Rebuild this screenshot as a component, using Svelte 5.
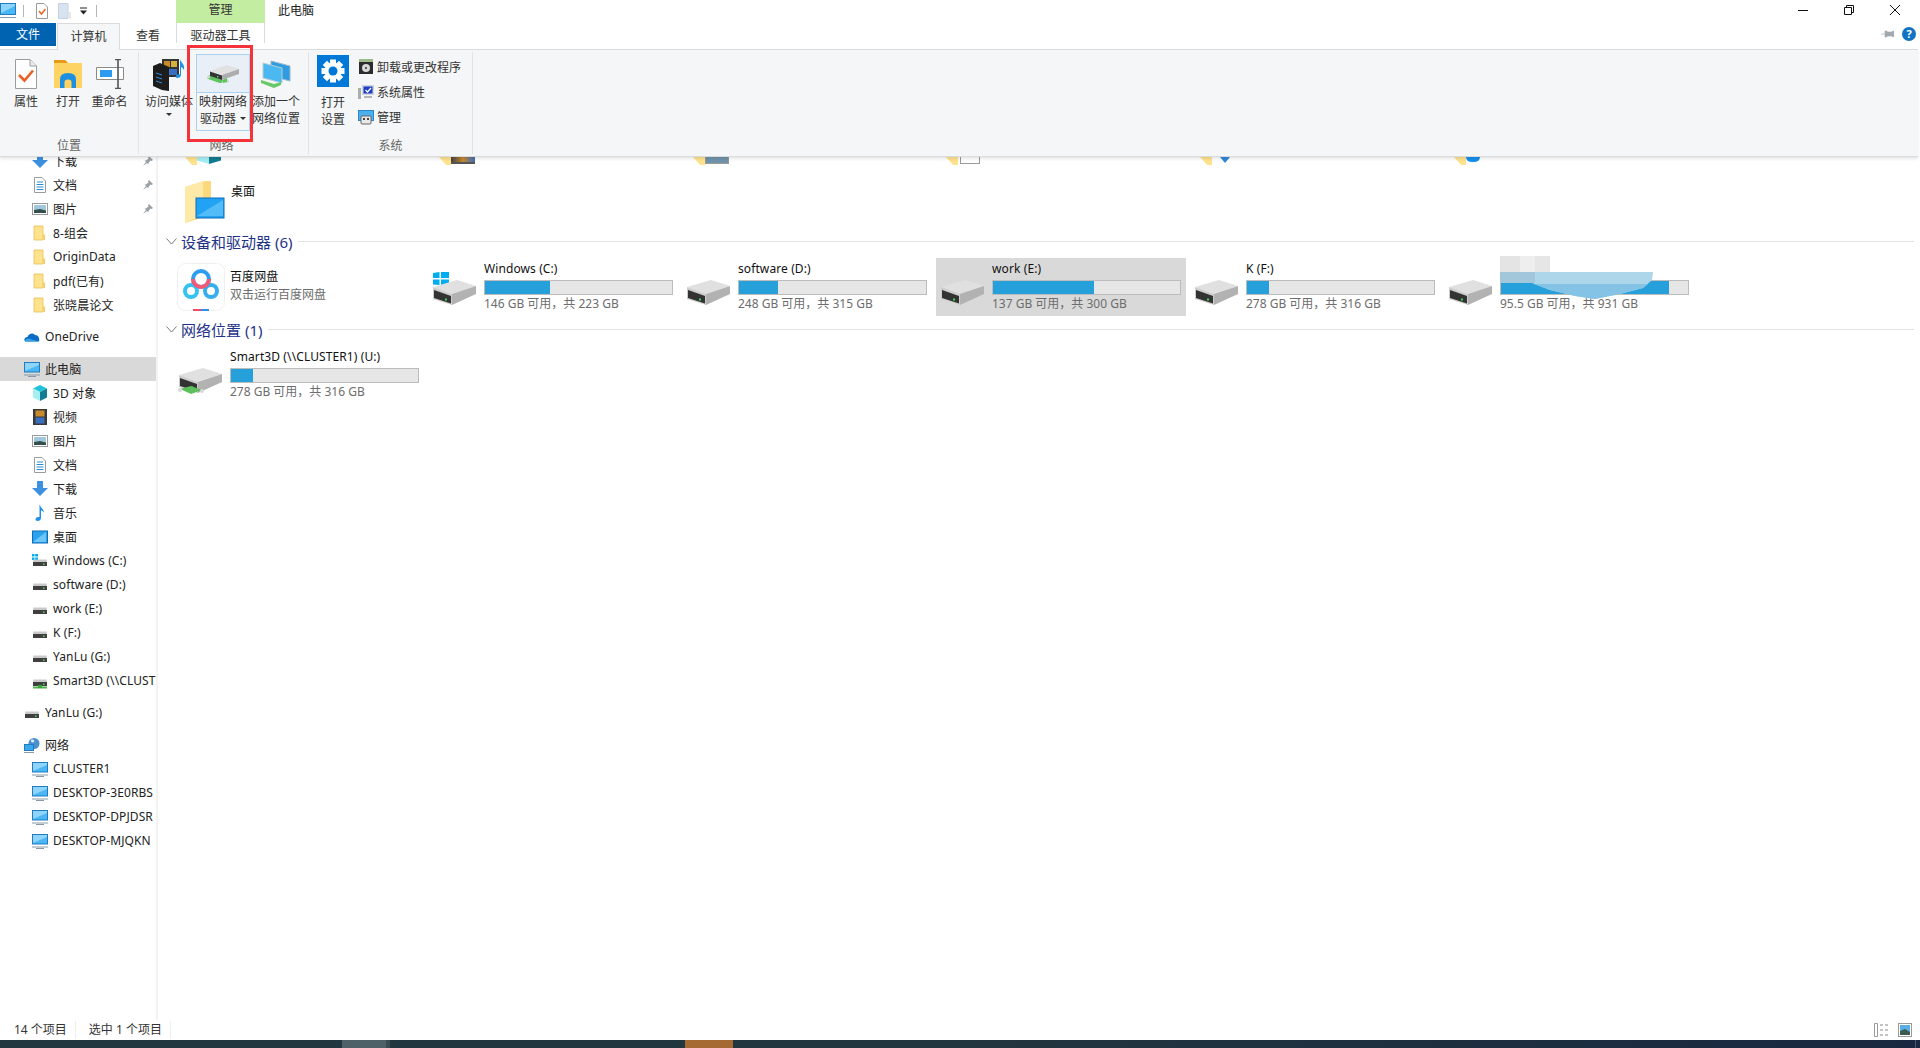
<script>
	const quick = [
		[{ name: '下载', icon: 'down', pin: true }, { name: '文档', icon: 'doc', pin: true }, { name: '图片', icon: 'pic', pin: true }, { name: '8-组会', icon: 'folder' }, { name: 'OriginData', icon: 'folder' }, { name: 'pdf(已有)', icon: 'folder' }, { name: '张晓晨论文', icon: 'folder' }],
		[{ name: 'OneDrive', icon: 'cloud', top: true }],
		[
			{ name: '此电脑', icon: 'pc', top: true, active: true },
			{ name: '3D 对象', icon: 'cube' },
			{ name: '视频', icon: 'film' },
			{ name: '图片', icon: 'pic' },
			{ name: '文档', icon: 'doc' },
			{ name: '下载', icon: 'down' },
			{ name: '音乐', icon: 'note' },
			{ name: '桌面', icon: 'desk' },
			{ name: 'Windows (C:)', icon: 'win' },
			{ name: 'software (D:)', icon: 'hdd' },
			{ name: 'work (E:)', icon: 'hdd' },
			{ name: 'K (F:)', icon: 'hdd' },
			{ name: 'YanLu (G:)', icon: 'hdd' },
			{ name: 'Smart3D (\\\\CLUST', icon: 'net' }
		],
		[{ name: 'YanLu (G:)', icon: 'hdd', top: true }],
		[
			{ name: '网络', icon: 'globe', top: true },
			{ name: 'CLUSTER1', icon: 'pc' },
			{ name: 'DESKTOP-3E0RBS', icon: 'pc' },
			{ name: 'DESKTOP-DPJDSR', icon: 'pc' },
			{ name: 'DESKTOP-MJQKN', icon: 'pc' }
		]
	];

	const drives = [
		{ name: 'Windows (C:)', free: '146 GB 可用，共 223 GB', used: 34.5, win: true },
		{ name: 'software (D:)', free: '248 GB 可用，共 315 GB', used: 21 },
		{ name: 'work (E:)', free: '137 GB 可用，共 300 GB', used: 54, selected: true },
		{ name: 'K (F:)', free: '278 GB 可用，共 316 GB', used: 12 },
		{ name: '', free: '95.5 GB 可用，共 931 GB', used: 90, blurred: true }
	];

	const peeks = ['cube', 'film', 'pic', 'doc', 'down', 'note'];
</script>

{#snippet hddBig(win, net)}
	<svg class="hdd" viewBox="0 0 46 34" width="46" height="34">
		{#if win}
			<g fill="#00adef">
				<path d="M1 1 7.500 0V6H1ZM9 -.3 17 -1.500V6H9ZM1 7.500H7.500V13L1 12.500ZM9 7.500H17V14L9 13.400Z" />
			</g>
		{/if}
		<path d="M1 15 25 8 44 14 20 22Z" fill="#e0e0e0" />
		<path d="M20 22 44 14V22L20 33Z" fill="#b2b2b2" />
		<path d="M1 15 20 22V33L1 27Z" fill="#cdcdcd" />
		<path d="M2 18 19 24V31.500L2 26Z" fill="#333" />
		<rect x="13" y="26.500" width="2" height="2" fill="#42d35a" />
		{#if net}
			<path d="M2 29 13 26 24 30 13 34Z" fill="#5cc05c" />
			<circle cx="2" cy="30" r="2" fill="#d8d8d8" />
			<circle cx="24" cy="31" r="2" fill="#d8d8d8" />
		{/if}
	</svg>
{/snippet}

{#snippet navIcon(kind)}
	<svg class="nav-icon" viewBox="0 0 16 16" width="16" height="16">
		{#if kind === 'folder'}
			<path d="M2 1H11V15H2Z" fill="#ffe28d" stroke="#e8c057" stroke-width=".8" />
			<path d="M11 9.500H13V15H11Z" fill="#f2cf6b" />
		{:else if kind === 'down'}
			<path d="M5 0H11V7H16L8 15 0 7H5Z" fill="#3d8fe0" />
		{:else if kind === 'doc'}
			<path d="M2.500 .5H10L13.500 4V15.500H2.500Z" fill="#fff" stroke="#9a9a9a" />
			<path d="M5 5H11M4.500 7.500H11.500M4.500 10H11.500M4.500 12.500H11.500" stroke="#2b8fd8" />
		{:else if kind === 'pic'}
			<rect x=".5" y="2.500" width="15" height="11" fill="#fff" stroke="#9a9a9a" />
			<rect x="2" y="4" width="12" height="8" fill="#9fc8e0" />
			<path d="M2 9 8 8 14 9.500V12H2Z" fill="#33514a" />
		{:else if kind === 'cloud'}
			<path d="M1 12.500C-.5 10 1 8 3.500 8 4.500 4.500 9 3 11 6 14 6 16 9 15 12.500 Z" fill="#0a6cc4" />
			<path d="M1 12.500C1 10 4 9 6 10L15 12.500Z" fill="#36a3e8" />
		{:else if kind === 'pc'}
			<rect x=".5" y="1.500" width="15" height="9.500" fill="#49b6f5" stroke="#1f7cc2" />
			<path d="M1 2H15V4L1 10Z" fill="#8fd4fb" />
			<path d="M0 14H16M4 15.500H12" stroke="#8a9aa8" />
		{:else if kind === 'cube'}
			<path d="M8 0 15 3.500 8 7 1 3.500Z" fill="#22c3d9" />
			<path d="M1 3.500 8 7V16L1 12.500Z" fill="#a6eef2" />
			<path d="M15 3.500 8 7V16L15 12.500Z" fill="#0f7d93" />
		{:else if kind === 'film'}
			<rect x="1" y="0" width="14" height="16" fill="#3a3a3a" />
			<rect x="3.500" y="1.500" width="9" height="6" fill="#c98a2c" />
			<rect x="3.500" y="8.500" width="9" height="6" fill="#3a6ec0" />
		{:else if kind === 'note'}
			<path d="M8 0C8.500 3 12 4 12 7.500 11 6 10 5.500 9 5.500V13C9 15 7.500 16 5.500 16 3.500 16 3 14 4.200 12.800 5.200 11.900 6.500 11.800 7.500 12.200V0Z" fill="#1e90e6" />
		{:else if kind === 'desk'}
			<rect x=".5" y="2" width="15" height="12" fill="#2aa3ef" stroke="#0f6cb8" />
			<path d="M1 13 14 3V13Z" fill="#6cc6fa" />
		{:else if kind === 'hdd' || kind === 'win' || kind === 'net'}
			{#if kind === 'win'}
				<path d="M0 1H2.500V3.500H0ZM3.200 1H6V3.500H3.200ZM0 4.500H2.500V7H0ZM3.200 4.500H6V7H3.200Z" fill="#00adef" />
			{/if}
			<path d="M1.500 6.500H14.500L15 9H1Z" fill="#c9c9c9" />
			<rect x="1" y="9" width="14" height="4" fill="#3f3f3f" />
			<rect x="11" y="10.500" width="1.500" height="1.500" fill="#4ad864" />
			{#if kind === 'net'}
				<rect x="1" y="13.500" width="14" height="2" fill="#4bb34b" />
				<rect x="6" y="12" width="4" height="3" fill="#3da23d" />
			{/if}
		{:else if kind === 'globe'}
			<circle cx="10" cy="6.500" r="5.500" fill="#4a8fd0" />
			<path d="M7 3C9 2 11 3 10 5 8 6 6.500 5 7 3Z" fill="#d9ecfa" />
			<rect x=".5" y="7.500" width="9" height="6" fill="#3ba6ea" stroke="#1f7cc2" />
			<path d="M0 15.500H10" stroke="#8a9aa8" />
		{/if}
	</svg>
{/snippet}

{#snippet peek(kind)}
	<div class="peek">
		<svg viewBox="0 0 12 9" width="12" height="9"><path d="M0 0H12V9L8 9Z" fill="#ffe28d" /></svg>
		<div class="peek-over {kind}"></div>
	</div>
{/snippet}

<div class="window">
	<header class="title">
		<div class="qat">
			<svg viewBox="0 0 16 16" width="16" height="16">
				<rect x=".5" y=".5" width="15" height="11" fill="#49b6f5" stroke="#1f7cc2" />
				<path d="M1 1H15V3L1 10Z" fill="#8fd4fb" />
				<path d="M0 14.500H16" stroke="#8a9aa8" />
			</svg>
			<span class="qat-sep"></span>
			<svg class="qat-doc" viewBox="0 0 14 16" width="14" height="16">
				<path d="M1.500 .5H9L12.500 4V15.500H1.500Z" fill="#fff" stroke="#999" />
				<path d="M4 8 6.500 11 10.500 6" fill="none" stroke="#e8632a" stroke-width="1.500" />
			</svg>
			<svg class="qat-faded" viewBox="0 0 14 16" width="14" height="16">
				<path d="M.5 .5H10V15.500H.5Z" fill="#d8e3f2" stroke="#c6d2e2" />
				<path d="M10 9H13V15.500H10Z" fill="#e6e6e6" />
			</svg>
			<svg class="qat-drop" viewBox="0 0 8 8" width="8" height="8">
				<path d="M0 1H7" stroke="#222" /><path d="M0 3.500H7L3.500 7.500Z" fill="#222" />
			</svg>
			<span class="qat-sep last"></span>
		</div>
		<div class="context-head">管理</div>
		<div class="title-text">此电脑</div>
		<div class="win-buttons">
			<button aria-label="最小化"><svg viewBox="0 0 10 10" width="10" height="10"><path d="M0 5.500H10" stroke="#111" /></svg></button>
			<button aria-label="还原"><svg viewBox="0 0 10 10" width="10" height="10"><path d="M.5 2.500H7.500V9.500H.5ZM2.500 2.500V.5H9.500V7.500H7.500" fill="none" stroke="#111" /></svg></button>
			<button aria-label="关闭"><svg viewBox="0 0 10 10" width="10" height="10"><path d="M0 0 10 10M10 0 0 10" stroke="#111" /></svg></button>
		</div>
	</header>

	<nav class="tabs">
		<div class="tab file">文件</div>
		<div class="tab current">计算机</div>
		<div class="tab view">查看</div>
		<div class="tab tools">驱动器工具</div>
		<div class="tabs-right">
			<svg viewBox="0 0 13 8" width="13" height="8"><path d="M0 4H4M4 1H6V7H4ZM6 2H10L13 1V7L10 6H6Z" fill="#a3a9ad" stroke="#a3a9ad" stroke-width=".6" /></svg>
			<span class="help">?</span>
		</div>
	</nav>

	<section class="ribbon">
		<div class="group g1">
			<div class="group-body">
				<div class="rb w40">
					<div class="rb-icon">
						<svg viewBox="0 0 22 30" width="22" height="30">
							<path d="M.5 .5H15L21.500 7V29.500H.5Z" fill="#fff" stroke="#9c9c9c" />
							<path d="M15 .5V7H21.500" fill="#ececec" stroke="#9c9c9c" />
							<path d="M4 16 9.500 21.500 18 11.500" fill="none" stroke="#ea5f24" stroke-width="2.600" />
						</svg>
					</div>
					<span>属性</span>
				</div>
				<div class="rb w44">
					<div class="rb-icon">
						<svg viewBox="0 0 28 30" width="28" height="30">
							<path d="M0 1H11L14 4H28V29H0Z" fill="#fdd463" />
							<path d="M0 1H11L14 4H0Z" fill="#e89a16" />
							<path d="M6 29V20Q6 14 14 14 22 14 22 20V29H17.500V23Q17.500 20.500 14 20.500 10.500 20.500 10.500 23V29Z" fill="#1e8fe0" />
						</svg>
					</div>
					<span>打开</span>
				</div>
				<div class="rb w39">
					<div class="rb-icon">
						<svg viewBox="0 0 28 30" width="28" height="30">
							<path d="M.5 8.500H27.500V20.500H.5Z" fill="#fff" stroke="#8a8a8a" />
							<rect x="4" y="11" width="12" height="7" fill="#2b9af0" />
							<path d="M19 .5H25M19 29.500H25M22 0V30" stroke="#555" stroke-width="1.600" fill="none" />
						</svg>
					</div>
					<span class="nw">重命名</span>
				</div>
			</div>
			<div class="group-label left">位置</div>
		</div>

		<div class="group g2">
			<div class="group-body">
				<div class="rb w60">
					<div class="rb-icon">
						<svg viewBox="0 0 32 34" width="32" height="34">
							<path d="M9 2 26 2V20H9Z" fill="#333" />
							<rect x="11" y="4" width="6" height="6" fill="#c98a2c" />
							<rect x="18" y="4" width="6" height="6" fill="#d5b13a" />
							<rect x="11" y="12" width="13" height="6" fill="#3a6ec0" />
							<path d="M27 2C28 6 32 7 31 13 30 11 29 10 28 10V18C28 20 26 21 24.500 21 22.500 21 22 19 23.500 18 24.500 17 26 17 27 17.500Z" fill="#1e90e6" />
							<path d="M0 9 7 6 16 10V34L9 33 0 29Z" fill="#1d1d1d" />
							<path d="M3 16 9 18M3 20 9 22M3 24 9 26" stroke="#2f8fe0" />
						</svg>
					</div>
					<span class="nw">访问媒体</span>
					<i class="caret"></i>
				</div>
				<div class="rb map">
					<div class="rb-icon boxed">
						<svg viewBox="0 0 32 18" width="32" height="18">
							<path d="M1 12 15 17" stroke="#5ec45e" stroke-width="3.500" />
							<circle cx="1.500" cy="12" r="1.500" fill="#d8d8d8" />
							<circle cx="20" cy="16" r="2" fill="#d8d8d8" />
							<path d="M15 15 20 13V17L16 18Z" fill="#5ec45e" />
							<path d="M3 6 20 0 32 4 15 10Z" fill="#e1e1e1" />
							<path d="M15 10 32 4V9L15 15Z" fill="#adadad" />
							<path d="M3 6.500 15 10.500V15L3 11Z" fill="#333" />
							<rect x="10" y="11" width="1.500" height="1.500" fill="#42d35a" />
						</svg>
					</div>
					<div class="map-text">
						<span class="nw">映射网络</span>
						<span class="nw">驱动器 <i class="caret inline"></i></span>
					</div>
				</div>
				<div class="rb w52">
					<div class="rb-icon">
						<svg viewBox="0 0 30 28" width="30" height="28">
							<path d="M10 1 29 6V21L10 16Z" fill="#2f9be0" stroke="#9ab8cc" />
							<path d="M2 3 21 8V23L2 18Z" fill="#4bb8f2" stroke="#b9ccd8" />
							<path d="M0 20 13 24 20 22 20 25 13 28 0 23Z" fill="#66c866" />
						</svg>
					</div>
					<span class="nw">添加一个</span>
					<span class="nw">网络位置</span>
				</div>
			</div>
			<div class="group-label mid">网络</div>
		</div>

		<div class="group g3">
			<div class="group-body">
				<div class="rb w48">
					<div class="rb-icon settings">
						<svg viewBox="0 0 32 32" width="32" height="32">
							<rect width="32" height="32" fill="#0078d7" />
							{#each [0, 45, 90, 135] as a}
								<rect x="13" y="4.500" width="6" height="23" fill="#fff" transform="rotate({a} 16 16)" />
							{/each}
							<circle cx="16" cy="16" r="8.500" fill="#fff" />
							<circle cx="16" cy="16" r="4.500" fill="#0078d7" />
						</svg>
					</div>
					<span>打开</span>
					<span>设置</span>
				</div>
				<ul class="small-list">
					<li>
						<svg viewBox="0 0 16 16" width="16" height="16">
							<rect x="1" y="2" width="14" height="13" fill="#2c2c2c" />
							<rect x="1" y="0" width="14" height="3" fill="#9dbb8a" />
							<circle cx="8" cy="9" r="4" fill="#d8d8d8" /><circle cx="8" cy="9" r="1" fill="#2c2c2c" />
						</svg>
						卸载或更改程序
					</li>
					<li>
						<svg viewBox="0 0 16 16" width="16" height="16">
							<rect x="4" y="1" width="12" height="10" fill="#cfd4da" />
							<rect x="5.500" y="2.500" width="9" height="7" fill="#1e3ec8" />
							<path d="M7.500 6 9.500 8 13 4" fill="none" stroke="#fff" stroke-width="1.300" />
							<rect x="0" y="4" width="3" height="11" fill="#a9b0a9" />
							<rect x="6" y="12" width="8" height="2" fill="#b5b5b5" />
						</svg>
						系统属性
					</li>
					<li>
						<svg viewBox="0 0 16 16" width="16" height="16">
							<rect x=".5" y="1.500" width="15" height="10" fill="#4bb0ee" stroke="#2d86c8" />
							<rect x="3" y="7" width="10" height="8" rx="1" fill="#e9e9e9" stroke="#666" />
							<rect x="5" y="9" width="2" height="2" fill="#444" /><rect x="9" y="9" width="2" height="2" fill="#444" />
						</svg>
						管理
					</li>
				</ul>
			</div>
			<div class="group-label">系统</div>
		</div>
	</section>
	<div class="callout"></div>

	<main class="main">
		<aside class="sidebar">
			{#each quick as group}
				<div class="nav-group">
					{#each group as row}
						<div class="nav-row" class:top={row.top} class:active={row.active}>
							{@render navIcon(row.icon)}
							<span class="nav-name">{row.name}</span>
							{#if row.pin}
								<svg class="pin" viewBox="0 0 10 10" width="10" height="10"><path d="M6 0 10 4 8.500 5 7.500 4.500 5.500 7 5.500 8.500 1.500 4.500 3 4.500 5.500 2.500 5 1ZM3 6 0 10 4 7Z" fill="#9aa0a4" /></svg>
							{/if}
						</div>
					{/each}
				</div>
			{/each}
		</aside>

		<div class="content">
			<div class="peek-row">
				{#each peeks as kind}
					{@render peek(kind)}
				{/each}
			</div>

			<div class="folder-tile">
				<svg viewBox="0 0 40 42" width="40" height="42">
					<path d="M0 6 20 0H26V34L0 42Z" fill="#fbd97c" />
					<path d="M0 6 18 0V34L0 42Z" fill="#ffe9a8" />
					<rect x="11" y="17" width="28" height="20" fill="#22a2f2" stroke="#0f6cb8" />
					<path d="M12 35 38 19V35Z" fill="#52bcf8" />
				</svg>
				<span class="tile-name">桌面</span>
			</div>

			<h2 class="section first">
				<svg viewBox="0 0 11 7" width="11" height="7"><path d="M.5 .5 5.500 6 10.500 .5" fill="none" stroke="#7a7a7a" /></svg>
				<span>设备和驱动器 (6)</span><i></i>
			</h2>

			<div class="device-grid">
				<div class="tile baidu">
					<div class="baidu-icon">
						<svg viewBox="0 0 48 48" width="48" height="48">
							<rect x=".5" y=".5" width="47" height="47" rx="8" fill="#fff" stroke="#f0f0f0" />
							<circle cx="14" cy="28" r="6" fill="none" stroke="#35c3f3" stroke-width="4" />
							<circle cx="34" cy="28" r="6" fill="none" stroke="#35aef0" stroke-width="4" />
							<circle cx="24" cy="16" r="8" fill="none" stroke="#2f9df0" stroke-width="4" />
							<path d="M16 16A8 8 0 0 0 32 16" fill="none" stroke="#ef5a74" stroke-width="4" />
							<rect x="16" y="46" width="8" height="2" fill="#f04a6a" /><rect x="24" y="46" width="8" height="2" fill="#2f8df0" />
						</svg>
					</div>
					<div class="baidu-text">
						<span class="tile-name">百度网盘</span>
						<span class="tile-sub">双击运行百度网盘</span>
					</div>
				</div>
				{#each drives as d}
					<div class="tile drive" class:selected={d.selected}>
						<div class="drive-icon">{@render hddBig(d.win, false)}</div>
						<div class="drive-info">
							<span class="tile-name">{d.name || '\u00a0'}</span>
							<div class="bar"><div class="fill" style="width:{d.used}%"></div></div>
							<span class="tile-sub">{d.free}</span>
						</div>
						{#if d.blurred}
							<svg class="smudge" viewBox="0 0 170 50" width="170" height="50">
								<rect x="0" y="0" width="20" height="16" fill="#e4e4e4" />
								<rect x="20" y="0" width="15" height="16" fill="#eeeeee" />
								<rect x="35" y="0" width="15" height="16" fill="#e6e6e6" />
								<path d="M0 16H153L152 24 143 32 120 38 95 43 75 40 50 34 32 27 0 27Z" fill="#aed6ea" />
								<path d="M0 16H35V27L32 27 0 27Z" fill="#a2c6da" />
								<path d="M34 28 50 34 75 40 95 43 120 38 143 32 148 28Z" fill="#84c3e6" />
							</svg>
						{/if}
					</div>
				{/each}
			</div>

			<h2 class="section second">
				<svg viewBox="0 0 11 7" width="11" height="7"><path d="M.5 .5 5.500 6 10.500 .5" fill="none" stroke="#7a7a7a" /></svg>
				<span>网络位置 (1)</span><i></i>
			</h2>

			<div class="device-grid">
				<div class="tile drive">
					<div class="drive-icon">{@render hddBig(false, true)}</div>
					<div class="drive-info">
						<span class="tile-name">Smart3D (\\CLUSTER1) (U:)</span>
						<div class="bar"><div class="fill" style="width:12%"></div></div>
						<span class="tile-sub">278 GB 可用，共 316 GB</span>
					</div>
				</div>
			</div>
		</div>
	</main>

	<footer class="status">
		<span class="count">14 个项目</span>
		<span class="count sel">选中 1 个项目</span>
		<div class="views">
			<svg viewBox="0 0 18 14" width="18" height="14"><path d="M.5 .5H3.500V13.500H.5Z" fill="#fff" stroke="#9a9a9a" /><path d="M6 2H9M11 2H14M6 7H9M11 7H14M6 12H9M11 12H14" stroke="#888" /></svg>
			<svg viewBox="0 0 14 14" width="14" height="14"><rect x=".5" y=".5" width="13" height="13" fill="#fff" stroke="#9a9a9a" /><rect x="2" y="2" width="10" height="10" fill="#5aaee8" /><path d="M2 8 7 6 12 9V12H2Z" fill="#3d5a50" /></svg>
		</div>
	</footer>

	<div class="taskbar">
		<span class="tb-active"></span><span class="tb-edge"></span>
		<span class="tb-orange"></span>
		<span class="tb-clock first">1917</span>
		<span class="tb-clock">22:10</span>
		<span class="tb-end"></span>
	</div>
</div>

<style>
	:global(body) {
		margin: 0;
		background: #fff;
	}

	.window {
		position: relative;
		display: flex;
		flex-direction: column;
		width: 1920px;
		height: 1048px;
		overflow: hidden;
		font-family: 'Noto Sans', 'Noto Sans CJK SC', sans-serif;
		font-size: 12px;
		color: #222;
		background: #fff;
	}

	svg {
		display: block;
		flex: none;
	}

	/* title bar */
	.title {
		display: flex;
		height: 23px;
		flex: none;
	}
	.qat {
		display: flex;
		align-items: center;
		width: 176px;
		height: 23px;
		padding-bottom: 1px;
		box-sizing: border-box;
	}
	.qat-sep {
		width: 1px;
		height: 12px;
		margin-left: 7px;
		background: #b5b5b5;
	}
	.qat-sep.last {
		margin-left: 8px;
	}
	.qat-doc {
		margin-left: 11px;
	}
	.qat-faded {
		margin-left: 9px;
	}
	.qat-drop {
		margin-left: 8px;
	}
	.context-head {
		width: 89px;
		background: #c3eda1;
		text-align: center;
		line-height: 20px;
		color: #333;
	}
	.title-text {
		margin-left: 13px;
		line-height: 22px;
		color: #222;
	}
	.win-buttons {
		display: flex;
		margin-left: auto;
		margin-right: 2px;
	}
	.win-buttons button {
		display: flex;
		justify-content: center;
		width: 46px;
		height: 23px;
		padding: 5px 0 0;
		border: 0;
		background: none;
	}

	/* tabs */
	.tabs {
		display: flex;
		flex: none;
		height: 26px;
		position: relative;
		z-index: 3;
	}
	.tab {
		text-align: center;
		line-height: 25px;
		box-sizing: border-box;
		color: #333;
	}
	.tab.file {
		width: 56px;
		height: 23px;
		background: #0063b1;
		color: #fff;
		line-height: 24px;
	}
	.tab.current {
		width: 63px;
		height: 27px;
		margin-left: 1px;
		background: #f5f6f7;
		border: 1px solid #dadbdc;
		border-bottom: 0;
	}
	.tab.view {
		width: 56px;
	}
	.tab.tools {
		width: 89px;
		height: 20px;
		border: 1px solid #dadbdc;
		border-width: 0 1px;
		line-height: 25px;
	}
	.tabs-right {
		display: flex;
		align-items: center;
		gap: 8px;
		margin-left: auto;
		margin-right: 4px;
		height: 21px;
	}
	.help {
		width: 14px;
		height: 14px;
		border-radius: 50%;
		background: #1272c4;
		color: #fff;
		font-size: 11px;
		font-weight: 700;
		line-height: 14px;
		text-align: center;
	}

	/* ribbon */
	.ribbon {
		position: relative;
		z-index: 2;
		display: flex;
		flex: none;
		height: 108px;
		margin-right: 2px;
		box-sizing: border-box;
		background: #f5f6f7;
		border-top: 1px solid #dadbdc;
		border-bottom: 1px solid #dadbdc;
		box-shadow: 0 2px 3px rgba(0, 0, 0, 0.1);
	}
	.group {
		display: flex;
		flex-direction: column;
		box-sizing: border-box;
		border-right: 1px solid #e2e3e4;
		margin: 2px 0;
		height: 102px;
	}
	.g1 {
		width: 139px;
		padding-left: 6px;
	}
	.g2 {
		width: 170px;
	}
	.g3 {
		width: 164px;
	}
	.group-body {
		display: flex;
		flex: 1;
		padding-top: 2px;
	}
	.group-label {
		height: 18px;
		text-align: center;
		color: #666;
		line-height: 20px;
	}
	.group-label.left {
		margin-left: -6px;
	}
	.group-label.mid {
		padding-right: 4px;
	}
	.rb {
		display: flex;
		flex-direction: column;
		align-items: center;
		color: #333;
		line-height: 17px;
	}
	.rb-icon {
		display: flex;
		align-items: center;
		justify-content: center;
		height: 39px;
	}
	.nw {
		white-space: nowrap;
	}
	.w40 {
		width: 40px;
	}
	.w44 {
		width: 44px;
	}
	.w39 {
		width: 39px;
	}
	.w60 {
		width: 60px;
	}
	.w52 {
		width: 52px;
	}
	.w48 {
		width: 48px;
	}
	.caret {
		width: 0;
		height: 0;
		margin-top: 3px;
		border: 3px solid transparent;
		border-top: 3px solid #333;
		border-bottom: 0;
	}
	.caret.inline {
		display: inline-block;
		margin: 0 0 2px 1px;
		vertical-align: middle;
	}
	.map {
		width: 54px;
		height: 77px;
		margin-left: -3px;
		box-sizing: border-box;
		border: 1px solid #a9d1f2;
	}
	.rb-icon.boxed {
		width: 100%;
		height: 37px;
		background: #e8eff7;
		border-bottom: 1px solid #a9d1f2;
	}
	.map-text {
		display: flex;
		flex-direction: column;
		align-items: center;
	}
	.settings {
		height: 39px;
		align-items: flex-start;
		padding-top: 1px;
	}
	.small-list {
		display: flex;
		flex-direction: column;
		gap: 9px;
		margin: 5px 0 0;
		padding: 0 0 0 1px;
		list-style: none;
	}
	.small-list li {
		display: flex;
		align-items: center;
		gap: 3px;
		height: 16px;
		color: #333;
		white-space: nowrap;
	}

	.callout {
		position: absolute;
		z-index: 4;
		left: 187px;
		top: 45px;
		width: 60px;
		height: 91px;
		border: 3px solid #f5333a;
	}

	/* main area */
	.main {
		display: flex;
		flex: 1;
		min-height: 0;
		overflow: hidden;
	}
	.sidebar {
		display: flex;
		flex-direction: column;
		gap: 8px;
		flex: none;
		width: 158px;
		height: calc(100% + 8px);
		margin-top: -8px;
		box-sizing: border-box;
		border-right: 2px solid #f3f3f3;
		overflow: hidden;
	}
	.nav-row {
		display: flex;
		align-items: center;
		position: relative;
		height: 24px;
		box-sizing: border-box;
		padding-left: 32px;
		white-space: nowrap;
		overflow: hidden;
	}
	.nav-row.top {
		padding-left: 24px;
	}
	.nav-row.active {
		background: #d9d9d9;
	}
	.nav-name {
		margin: -1px 0 0 5px;
		color: #222;
		letter-spacing: 0.1px;
	}
	.pin {
		position: absolute;
		right: 3px;
		top: 7px;
	}

	.content {
		flex: 1;
		min-width: 0;
		padding: 0 6px 0 1px;
	}
	.peek-row {
		display: flex;
		height: 8px;
		overflow: hidden;
		padding-left: 26px;
	}
	.peek {
		display: flex;
		width: 253.8px;
		flex: none;
		height: 9px;
		align-items: flex-end;
	}
	.peek-over {
		width: 24px;
		height: 7px;
		align-self: flex-start;
		box-sizing: border-box;
	}
	.peek-over.cube {
		background: linear-gradient(90deg, #a6eef2 50%, #0f7d93 50%);
		clip-path: polygon(0 0, 100% 0, 100% 50%, 50% 100%, 0 50%);
	}
	.peek-over.film {
		background: linear-gradient(90deg, #444, #c98a2c 50%, #3a6ec0);
		border-bottom: 2px solid #555;
	}
	.peek-over.pic {
		width: 24px;
		border: 1px solid #999;
		border-top: 0;
		background: #6f93aa;
	}
	.peek-over.doc {
		width: 20px;
		margin-left: 2px;
		border: 1px solid #999;
		border-top: 0;
		background: #fff;
	}
	.peek-over.down {
		width: 0;
		height: 0;
		margin-left: 8px;
		border: 5px solid transparent;
		border-top: 6px solid #2e88dc;
		border-bottom: 0;
	}
	.peek-over.note {
		width: 14px;
		height: 5px;
		border-radius: 0 0 7px 7px;
		background: #1590ee;
	}

	.folder-tile {
		display: flex;
		gap: 6px;
		height: 42px;
		margin: 16px 0 0 26px;
	}
	.tile-name {
		color: #111;
		line-height: 18px;
		white-space: nowrap;
		letter-spacing: 0.1px;
	}
	.folder-tile .tile-name {
		margin-top: 2px;
	}
	.tile-sub {
		color: #6d6d6d;
		line-height: 18px;
		white-space: nowrap;
	}

	.section {
		display: flex;
		align-items: center;
		margin: 0;
		height: 24px;
		padding-left: 7px;
		font-size: 15px;
		font-weight: 400;
		color: #1e3287;
	}
	.section.first {
		margin-top: 6px;
	}
	.section.second {
		margin-top: 1px;
	}
	.section svg {
		margin-right: 4px;
	}
	.section i {
		flex: 1;
		height: 1px;
		margin-left: 6px;
		background: #e2e2e2;
	}

	.device-grid {
		display: grid;
		grid-template-columns: repeat(6, 254px);
		padding-left: 15px;
		margin-top: 5px;
	}
	.tile {
		display: flex;
		position: relative;
		width: 250px;
		height: 58px;
		box-sizing: border-box;
	}
	.tile.selected {
		background: #d9d9d9;
	}
	.baidu-icon {
		margin: 5px 0 0 3px;
	}
	.baidu-text {
		display: flex;
		flex-direction: column;
		margin: 10px 0 0 5px;
	}
	.drive-icon {
		display: flex;
		align-items: flex-end;
		width: 56px;
		padding: 0 0 10px 4px;
		box-sizing: border-box;
	}
	.drive-info {
		display: flex;
		flex-direction: column;
		width: 189px;
		padding-top: 2px;
	}
	.drive-info .tile-name {
		margin-bottom: 2px;
	}
	.bar {
		height: 15px;
		box-sizing: border-box;
		border: 1px solid #bcbcbc;
		background: #e6e6e6;
	}
	.fill {
		height: 100%;
		background: #26a0da;
	}
	.smudge {
		position: absolute;
		left: 56px;
		top: -2px;
	}

	/* status + taskbar */
	.status {
		display: flex;
		align-items: center;
		flex: none;
		height: 20px;
		padding-left: 14px;
		color: #333;
	}
	.count {
		padding-right: 8px;
		border-right: 1px solid #eee;
		line-height: 18px;
	}
	.count.sel {
		margin-left: 13px;
	}
	.views {
		display: flex;
		align-items: center;
		gap: 6px;
		margin-left: auto;
		margin-right: 8px;
	}
	.taskbar {
		display: flex;
		flex: none;
		height: 8px;
		overflow: hidden;
		background: linear-gradient(90deg, #22373f, #22363f 50%, #1a2740);
		color: #fff;
		font-size: 11px;
		line-height: 24px;
	}
	.tb-active {
		width: 44px;
		margin-left: 342px;
		background: #4f6168;
	}
	.tb-edge {
		width: 4px;
		background: #3a4b52;
	}
	.tb-orange {
		width: 48px;
		margin-left: 295px;
		background: #a56a31;
	}
	.tb-clock.first {
		margin-left: 931px;
	}
	.tb-clock {
		margin-left: 127px;
	}
	.tb-end {
		width: 1px;
		margin-left: auto;
		margin-right: 4px;
		background: #49586a;
	}
</style>
